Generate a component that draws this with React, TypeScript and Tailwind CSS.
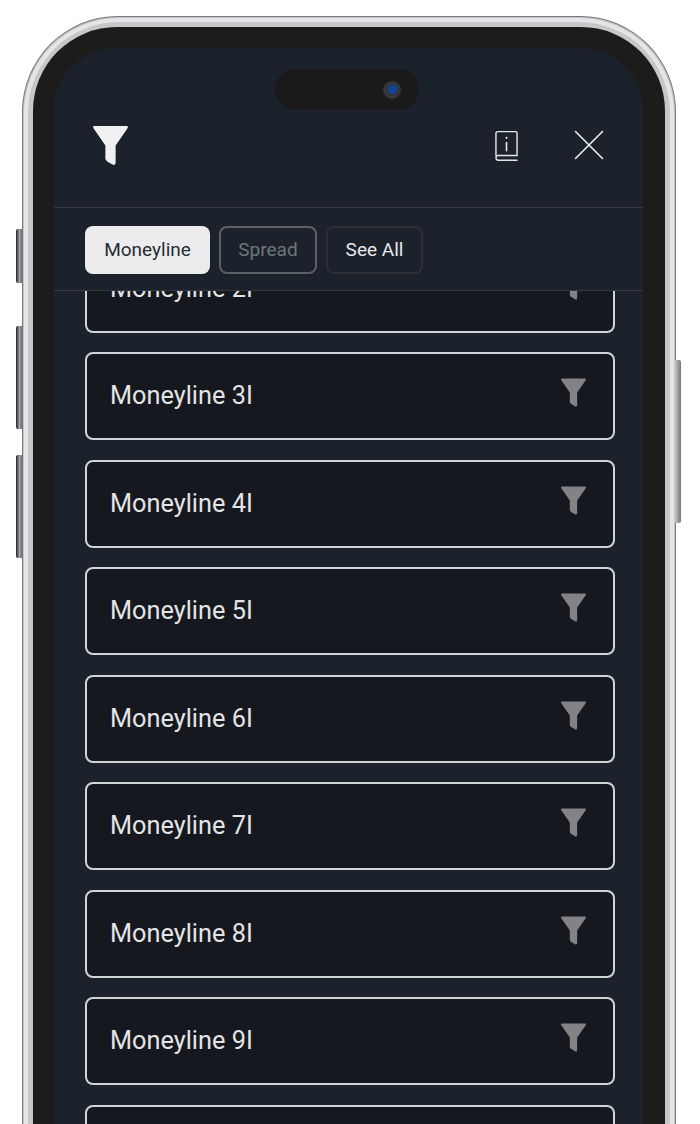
const rows = ["2I", "3I", "4I", "5I", "6I", "7I", "8I", "9I", "10I"];

const FunnelIcon = ({ className }: { className: string }) => (
  <svg viewBox="0 0 34 38" className={className} fill="currentColor">
    <path d="M1.5 0H32.5C33.8 0 34.4 1 33.6 2.2L22 19V35.5C22 37.5 20.6 38.6 19 37.6L14.5 35C12.8 33.9 12 32.8 12 31.5V19L0.4 2.2C-0.4 1 0.2 0 1.5 0Z" />
  </svg>
);

const BookInfoIcon = () => (
  <svg viewBox="0 0 24 32" className="h-[32px] w-[23px]" fill="none" stroke="#e5e5e5" strokeLinecap="round">
    <path d="M1 26V3C1 1.8 1.8 1 3 1H21.5C22.4 1 23 1.6 23 2.5V26H3.5C2 26 1 27 1 28.3C1 29.8 2 30.8 3.5 30.8H23" strokeWidth="1.5" />
    <path d="M12 12.5V21" strokeWidth="1.7" />
    <circle cx="12" cy="7.5" r="1.1" fill="#e5e5e5" stroke="none" />
  </svg>
);

const CloseIcon = () => (
  <svg viewBox="0 0 30 30" className="h-[30px] w-[30px]" fill="none" stroke="#eeeeee" strokeWidth="1.6" strokeLinecap="round">
    <path d="M1.5 1.5L28.5 28.5M28.5 1.5L1.5 28.5" />
  </svg>
);

const SideButton = ({ className }: { className: string }) => (
  <div className={`absolute left-[-6px] w-[6px] rounded-l-[2px] border-l border-[#3a3038] bg-gradient-to-r from-[#4a424a] via-[#a5a5a8] to-[#6c6c70] ${className}`} />
);

export default function App() {
  return (
    <div className="h-[1124px] w-[700px] overflow-hidden bg-white pl-[22px] pt-[16px] font-['Roboto',sans-serif]">
      <div className="relative w-[654px]">
        <SideButton className="top-[213px] h-[54px]" />
        <SideButton className="top-[310px] h-[103px]" />
        <SideButton className="top-[439px] h-[103px]" />
        <div className="absolute left-[653px] top-[344px] h-[163px] w-[6px] rounded-r-[2px] bg-gradient-to-r from-[#c8c8cc] to-[#77777b]" />

        {/* metal band */}
        <div className="h-[1200px] rounded-t-[96px] border-x border-t border-[#77777a] bg-[#c6c7ca] p-[1px]">
          <div className="h-full rounded-t-[95px] border-x-[4px] border-t-[4px] border-[#e4e5e7] px-[5px] pt-[5px]">
            {/* black bezel */}
            <div className="h-full rounded-t-[84px] bg-[#1c1c1a] px-[21px] pt-[21px]">
              {/* screen */}
              <div className="relative h-full w-[589px] overflow-hidden rounded-t-[62px] bg-[#1b222c]">
                <div className="absolute left-[221px] top-[21px] z-20 flex h-[41px] w-[144px] items-center justify-end rounded-full bg-[#1a1a1a] pr-[18px]">
                  <div className="flex h-[18px] w-[18px] items-center justify-center rounded-full bg-[#34383d]">
                    <div className="h-[9px] w-[9px] rounded-full bg-[#12439a]" />
                  </div>
                </div>

                <div className="relative z-10 bg-[#1b222c]">
                  <div className="flex h-[160px] items-start justify-between border-b border-[#353a42] pl-[39px] pr-[39px] pt-[78px]">
                    <FunnelIcon className="h-[39px] w-[35px] text-[#f0f0f2]" />
                    <div className="flex items-start gap-[56px]">
                      <div className="mt-[4px]">
                        <BookInfoIcon />
                      </div>
                      <div className="mt-[4px]">
                        <CloseIcon />
                      </div>
                    </div>
                  </div>

                  <div className="flex h-[83px] items-start gap-[9px] border-b border-[#353a42] pl-[31px] pt-[18px] text-[19px]">
                    <button className="flex h-[48px] w-[125px] items-center justify-center rounded-[8px] bg-[#ececee] text-[#272c35]">
                      Moneyline
                    </button>
                    <button className="flex h-[48px] w-[98px] items-center justify-center rounded-[8px] border-2 border-[#5c6066] text-[#71757b]">
                      Spread
                    </button>
                    <button className="flex h-[48px] w-[97px] items-center justify-center rounded-[8px] border-2 border-[#2b3037] text-[#e8e8e8]">
                      See All
                    </button>
                  </div>
                </div>

                <div className="mt-[-46.5px] flex flex-col gap-[19.5px] pl-[31px] pr-[28px]">
                  {rows.map((name) => (
                    <div
                      key={name}
                      className="flex h-[88px] shrink-0 justify-between rounded-[8px] border-2 border-[#d2d4d6] bg-[#15181f] pl-[23px] pr-[27px]"
                    >
                      <span className="self-center text-[25.3px] text-[#e4e4e4]">Moneyline {name}</span>
                      <FunnelIcon className="mt-[24px] h-[29px] w-[25px] text-[#838385]" />
                    </div>
                  ))}
                </div>
              </div>
            </div>
          </div>
        </div>
      </div>
    </div>
  );
}
